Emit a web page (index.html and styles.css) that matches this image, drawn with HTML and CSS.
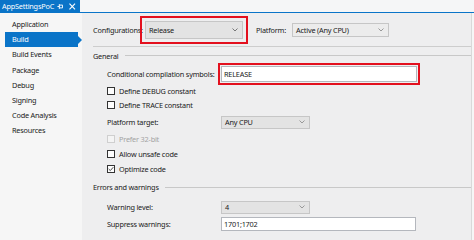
FILE: index.html
```html
<!DOCTYPE html>
<html lang="en">

<head>
    <meta charset="UTF-8" />
    <title>AppSettingsPoC - Build</title>
    <link rel="stylesheet" href="styles.css">
</head>

<body>
    <div class="tabbar">
        <div class="tab">
            <span class="tab-title">AppSettingsPoC</span>
            <svg class="tab-pin" width="7" height="7" viewBox="0 0 7 7">
                <path d="M0.5 3.5h2M2.5 1v5M2.5 2h3.5v3h-3.5" fill="none" stroke="#fff" stroke-width="1" />
            </svg>
            <svg class="tab-close" width="7" height="7" viewBox="0 0 7 7">
                <path d="M0.5 0.5l6 6M6.5 0.5l-6 6" stroke="#fff" stroke-width="1.2" />
            </svg>
        </div>
    </div>

    <div class="page">
        <nav class="sidebar">
            <div class="nav-item">Application</div>
            <div class="nav-item active">Build</div>
            <div class="nav-item">Build Events</div>
            <div class="nav-item">Package</div>
            <div class="nav-item">Debug</div>
            <div class="nav-item">Signing</div>
            <div class="nav-item">Code Analysis</div>
            <div class="nav-item">Resources</div>
        </nav>

        <main class="panel">
            <div class="config-row">
                <span class="config-label">Configurations:</span>
                <div class="dropdown config-select highlight">
                    <span>Release</span>
                    <svg class="chevron" width="6" height="4" viewBox="0 0 6 4"><path d="M0.5 0.5l2.5 2.5 2.5-2.5" fill="none" stroke="#777" /></svg>
                </div>
                <span class="platform-label">Platform:</span>
                <div class="dropdown platform-select">
                    <span>Active (Any CPU)</span>
                    <svg class="chevron" width="6" height="4" viewBox="0 0 6 4"><path d="M0.5 0.5l2.5 2.5 2.5-2.5" fill="none" stroke="#999" /></svg>
                </div>
            </div>

            <div class="rule"></div>

            <div class="section">
                <span>General</span>
                <i class="section-line"></i>
            </div>

            <div class="field">
                <span class="field-label">Conditional compilation symbols:</span>
                <div class="textbox symbols highlight">RELEASE</div>
            </div>

            <label class="check"><span class="box"></span>Define DEBUG constant</label>
            <label class="check"><span class="box"></span>Define TRACE constant</label>

            <div class="field">
                <span class="field-label">Platform target:</span>
                <div class="dropdown small-select">
                    <span>Any CPU</span>
                    <svg class="chevron" width="6" height="4" viewBox="0 0 6 4"><path d="M0.5 0.5l2.5 2.5 2.5-2.5" fill="none" stroke="#999" /></svg>
                </div>
            </div>

            <label class="check disabled"><span class="box"></span>Prefer 32-bit</label>
            <label class="check"><span class="box"></span>Allow unsafe code</label>
            <label class="check">
                <span class="box">
                    <svg width="6" height="6" viewBox="0 0 6 6"><path d="M0.7 3l1.6 1.6 3-3.4" fill="none" stroke="#333" stroke-width="0.9" /></svg>
                </span>Optimize code
            </label>

            <div class="section">
                <span>Errors and warnings</span>
                <i class="section-line"></i>
            </div>

            <div class="field">
                <span class="field-label">Warning level:</span>
                <div class="dropdown small-select">
                    <span>4</span>
                    <svg class="chevron" width="6" height="4" viewBox="0 0 6 4"><path d="M0.5 0.5l2.5 2.5 2.5-2.5" fill="none" stroke="#999" /></svg>
                </div>
            </div>

            <div class="field">
                <span class="field-label">Suppress warnings:</span>
                <div class="textbox suppress">1701;1702</div>
            </div>
        </main>
    </div>
</body>

</html>
```

FILE: styles.css
```css
* {
    margin: 0;
    padding: 0;
    box-sizing: border-box;
}

body {
    font-family: 'Noto Sans', 'Open Sans', sans-serif;
    font-size: 7.3px;
    letter-spacing: -0.2px;
    color: #1a1a1a;
    background: #f6f6f6;
    height: 100vh;
    overflow: hidden;
    white-space: nowrap;
}

/* document tab strip */
.tabbar {
    height: 13px;
    background: #f5f6f7;
    border-bottom: 1px solid #0a74c8;
}

.tab {
    width: 80px;
    height: 12px;
    background: #0a74c8;
    color: #fff;
    display: flex;
    align-items: center;
    padding-left: 2px;
}

.tab-title {
    width: 59px;
    line-height: 12px;
}

.tab-pin {
    margin-right: 6px;
}

.tab-close {
    margin-right: 4px;
}

.page {
    display: flex;
    height: calc(100vh - 13px);
}

/* left navigation */
.sidebar {
    width: 82px;
    padding-top: 4px;
    background: #f6f6f6;
}

.nav-item {
    position: relative;
    width: 73px;
    height: 15.2px;
    line-height: 15px;
    margin-left: 5px;
    padding-left: 7px;
}

.nav-item.active {
    background: #0a74c8;
    color: #fff;
}

.nav-item.active::after {
    content: '';
    position: absolute;
    right: -4px;
    top: 3.5px;
    border-left: 4px solid #0a74c8;
    border-top: 4px solid transparent;
    border-bottom: 4px solid transparent;
}

/* property panel */
.panel {
    width: 390px;
    background: #eeeeef;
    border-right: 1px solid #d9d9d9;
    padding-left: 11px;
    display: grid;
    grid-template-rows: 33px 1px 17px 20px 13px 16px 18px 15px 15px 15px 22px 18px 16px 1fr;
}

.config-row {
    display: flex;
    align-items: center;
}

.config-label {
    width: 52px;
}

.platform-label {
    width: 36px;
    margin-left: 13px;
}

.dropdown {
    display: flex;
    align-items: center;
    justify-content: space-between;
    background: #e3e3e3;
    border: 1px solid #c6c6c6;
    padding: 0 4px 0 3px;
}

.config-select {
    width: 98px;
    height: 18px;
}

.platform-select {
    width: 97px;
    height: 14px;
    background: #ececec;
}

.small-select {
    width: 89px;
    height: 13px;
}

.highlight {
    outline: 2px solid #e3101e;
    outline-offset: 3px;
}

.textbox.highlight {
    outline-offset: 1px;
}

.rule {
    height: 1px;
    background: #cdcdcd;
}

.section {
    display: flex;
    align-items: center;
}

.section-line {
    flex: 1;
    height: 1px;
    background: #c8c8c8;
    margin-left: 6px;
}

.field {
    display: flex;
    align-items: center;
    padding-left: 14px;
}

.field-label {
    width: 114px;
}

.textbox {
    background: #fff;
    border: 1px solid #b4b7bd;
    padding-left: 2px;
    display: flex;
    align-items: center;
}

.symbols {
    width: 196px;
    height: 16px;
}

.suppress {
    width: 195px;
    height: 14px;
}

.check {
    display: flex;
    align-items: center;
    padding-left: 14px;
}

.box {
    width: 8px;
    height: 8px;
    border: 1px solid #333;
    background: #fdfdfd;
    margin-right: 4px;
    display: flex;
    align-items: center;
    justify-content: center;
}

.check.disabled {
    color: #a3a3a3;
}

.check.disabled .box {
    border-color: #cfcfcf;
    background: #f4f4f4;
}
```
